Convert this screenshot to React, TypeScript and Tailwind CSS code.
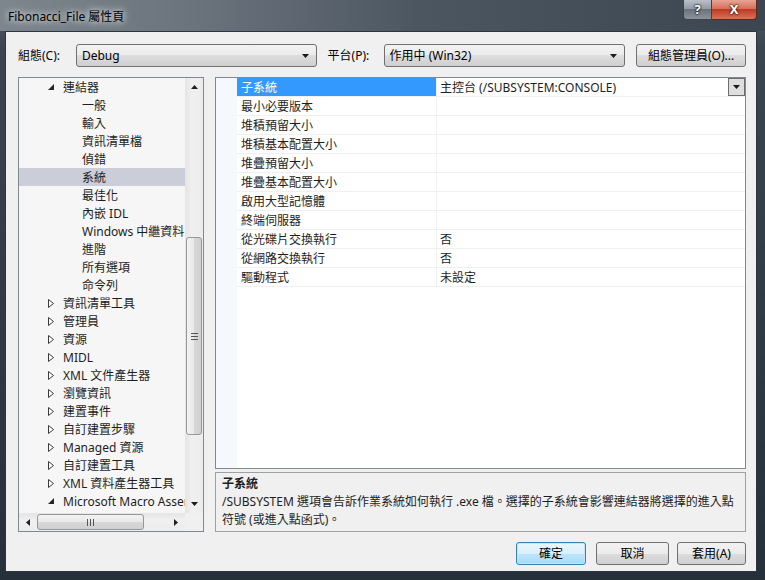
import React from "react";

const F = "font-['Noto_Sans','Noto_Sans_CJK_TC',sans-serif]";

const btn =
  "border border-[#707070] rounded-[3px] bg-[linear-gradient(to_bottom,#f2f2f2_0%,#ebebeb_50%,#dddddd_50%,#cfcfcf_100%)]";

function DownTri({ className = "" }: { className?: string }) {
  return (
    <svg width="7" height="4" viewBox="0 0 7 4" className={className}>
      <polygon points="0,0 7,0 3.5,4" fill="#1a1a1a" />
    </svg>
  );
}

function Combo({ text, w }: { text: string; w: string }) {
  return (
    <div className={`${w} h-[23px] ${btn} flex items-center pl-[5px] pr-[7px] justify-between`}>
      <span className="text-[12px] leading-[16px] pt-[1px] text-black">{text}</span>
      <DownTri />
    </div>
  );
}

function Expanded() {
  return (
    <svg width="6" height="6" viewBox="0 0 6 6">
      <polygon points="6,0 6,6 0,6" fill="#262626" />
    </svg>
  );
}
function Collapsed() {
  return (
    <svg width="6" height="9" viewBox="0 0 6 9">
      <polygon points="0.5,0.5 5.5,4.5 0.5,8.5" fill="white" stroke="#3a3a3a" strokeWidth="1" />
    </svg>
  );
}

type TreeItem = { t: string; lvl: 1 | 2; exp?: boolean; sel?: boolean };
const tree: TreeItem[] = [
  { t: "連結器", lvl: 1, exp: true },
  { t: "一般", lvl: 2 },
  { t: "輸入", lvl: 2 },
  { t: "資訊清單檔", lvl: 2 },
  { t: "偵錯", lvl: 2 },
  { t: "系統", lvl: 2, sel: true },
  { t: "最佳化", lvl: 2 },
  { t: "內嵌 IDL", lvl: 2 },
  { t: "Windows 中繼資料", lvl: 2 },
  { t: "進階", lvl: 2 },
  { t: "所有選項", lvl: 2 },
  { t: "命令列", lvl: 2 },
  { t: "資訊清單工具", lvl: 1 },
  { t: "管理員", lvl: 1 },
  { t: "資源", lvl: 1 },
  { t: "MIDL", lvl: 1 },
  { t: "XML 文件產生器", lvl: 1 },
  { t: "瀏覽資訊", lvl: 1 },
  { t: "建置事件", lvl: 1 },
  { t: "自訂建置步驟", lvl: 1 },
  { t: "Managed 資源", lvl: 1 },
  { t: "自訂建置工具", lvl: 1 },
  { t: "XML 資料產生器工具", lvl: 1 },
  { t: "Microsoft Macro Assembler", lvl: 1, exp: true },
];

const props: [string, string][] = [
  ["子系統", "主控台 (/SUBSYSTEM:CONSOLE)"],
  ["最小必要版本", ""],
  ["堆積預留大小", ""],
  ["堆積基本配置大小", ""],
  ["堆疊預留大小", ""],
  ["堆疊基本配置大小", ""],
  ["啟用大型記憶體", ""],
  ["終端伺服器", ""],
  ["從光碟片交換執行", "否"],
  ["從網路交換執行", "否"],
  ["驅動程式", "未設定"],
];

const thumbV =
  "border border-[#979797] rounded-[3px] bg-[linear-gradient(to_right,#f3f3f3,#e8e8e8_50%,#d8d8d8_50%,#d0d0d0)]";
const thumbH =
  "border border-[#979797] rounded-[3px] bg-[linear-gradient(to_bottom,#f3f3f3,#e8e8e8_50%,#d8d8d8_50%,#d0d0d0)]";

export default function App() {
  return (
    <div
      className={`${F} w-[765px] h-[580px] overflow-hidden flex flex-col bg-[linear-gradient(to_bottom,#56606a_0%,#3a4550_8%,#26303b_100%)]`}
    >
      {/* title bar */}
      <div className="h-[31px] shrink-0 flex items-start relative bg-[linear-gradient(to_right,#7d868e_0%,#6b747d_25%,#4c5661_55%,#3c4651_100%)]">
        <div className="pl-[8px] pt-[8px] text-[12px] leading-[17px] text-black [text-shadow:0_0_6px_rgba(255,255,255,0.9),0_0_10px_rgba(255,255,255,0.6)]">
          Fibonacci_File 屬性頁
        </div>
        <div className="ml-auto mr-[8px] flex h-[20px]">
          <div className="w-[29px] h-[20px] border border-[#3b434c] border-t-0 rounded-bl-[4px] bg-[linear-gradient(to_bottom,#b9c0c7,#8f989f_50%,#6a737b_50%,#8b949b)] flex items-center justify-center text-white font-bold text-[13px] [text-shadow:0_0_2px_#000,0_0_2px_#000]">
            ?
          </div>
          <div className="w-[45px] h-[20px] border border-[#5a2a22] border-t-0 border-l-0 rounded-br-[4px] bg-[linear-gradient(to_bottom,#e8a493,#d36b56_50%,#bf3a22_50%,#d8735a)] flex items-center justify-center text-white font-bold text-[13px] [text-shadow:0_0_2px_#3a0a00,0_0_2px_#3a0a00]">
            X
          </div>
        </div>
      </div>

      {/* client */}
      <div className="ml-[5px] mr-[8px] h-[541px] bg-[#f0f0f0] border border-[#2c3640] flex flex-col pl-[12px] pr-[10px] pt-[12px] text-[12px] text-black">
        {/* row 1 */}
        <div className="flex items-center h-[23px]">
          <span className="w-[58px] leading-[16px] pt-[1px]">組態(C):</span>
          <Combo text="Debug" w="w-[241px]" />
          <span className="ml-[11px] w-[56px] leading-[16px] pt-[1px]">平台(P):</span>
          <Combo text="作用中 (Win32)" w="w-[242px]" />
          <div className={`ml-[11px] w-[110px] h-[23px] ${btn} flex items-center justify-center leading-[16px] pt-[1px]`}>
            組態管理員(O)...
          </div>
        </div>

        {/* main */}
        <div className="flex mt-[10px] h-[455px]">
          {/* tree */}
          <div className="w-[186px] h-full border border-[#828790] bg-[#f6f6f6] flex flex-col">
            <div className="flex flex-1 min-h-0">
              <div className="w-[166px] overflow-hidden flex flex-col">
                {tree.map((it, i) => (
                  <div
                    key={i}
                    className={`h-[18px] shrink-0 flex items-center whitespace-nowrap ${it.sel ? "bg-[#cbcdd9]" : ""}`}
                  >
                    {it.lvl === 1 ? (
                      <>
                        <div className="w-[44px] shrink-0 flex justify-end pr-[9px]">
                          {it.exp ? <Expanded /> : <Collapsed />}
                        </div>
                        <span className="leading-[16px] pt-[2px] text-[#1e1e1e]">{it.t}</span>
                      </>
                    ) : (
                      <>
                        <div className="w-[63px] shrink-0" />
                        <span className="leading-[16px] pt-[2px] text-[#1e1e1e]">{it.t}</span>
                      </>
                    )}
                  </div>
                ))}
              </div>
              {/* vertical scrollbar */}
              <div className="w-[18px] bg-[linear-gradient(to_right,#e4e4e4,#f0f0f0_40%,#ececec)] flex flex-col items-center">
                <div className="h-[18px] flex items-center justify-center">
                  <svg width="7" height="4" viewBox="0 0 7 4">
                    <polygon points="0,4 7,4 3.5,0" fill="#222" />
                  </svg>
                </div>
                <div className="h-[141px]" />
                <div className={`w-[16px] h-[198px] ${thumbV} flex items-center justify-center`}>
                  <div className="flex flex-col gap-[2px]">
                    <div className="w-[7px] h-[1px] bg-[#555]" />
                    <div className="w-[7px] h-[1px] bg-[#555]" />
                    <div className="w-[7px] h-[1px] bg-[#555]" />
                  </div>
                </div>
                <div className="flex-1" />
                <div className="h-[18px] flex items-center justify-center">
                  <DownTri />
                </div>
              </div>
            </div>
            {/* horizontal scrollbar */}
            <div className="h-[18px] flex">
              <div className="w-[166px] flex items-center bg-[linear-gradient(to_bottom,#e4e4e4,#f0f0f0_40%,#ececec)]">
                <div className="w-[18px] flex justify-center">
                  <svg width="4" height="7" viewBox="0 0 4 7">
                    <polygon points="4,0 4,7 0,3.5" fill="#222" />
                  </svg>
                </div>
                <div className={`w-[107px] h-[16px] ${thumbH} flex items-center justify-center`}>
                  <div className="flex gap-[2px]">
                    <div className="w-[1px] h-[7px] bg-[#555]" />
                    <div className="w-[1px] h-[7px] bg-[#555]" />
                    <div className="w-[1px] h-[7px] bg-[#555]" />
                  </div>
                </div>
                <div className="flex-1" />
                <div className="w-[18px] flex justify-center">
                  <svg width="4" height="7" viewBox="0 0 4 7">
                    <polygon points="0,0 0,7 4,3.5" fill="#222" />
                  </svg>
                </div>
              </div>
              <div className="w-[18px] bg-[#f0f0f0]" />
            </div>
          </div>

          {/* right column */}
          <div className="ml-[11px] flex-1 flex flex-col">
            <div className="h-[392px] border border-[#828790] bg-white flex">
              <div className="w-[21px] bg-[#f5f8fc]" />
              <div className="flex-1 flex flex-col">
                {props.map(([n, v], i) => (
                  <div key={i} className="h-[19px] flex border-b border-[#f0f0f0]">
                    <div
                      className={`w-[200px] border-r border-[#f0f0f0] pl-[4px] pt-[2px] flex items-center leading-[16px] ${
                        i === 0 ? "bg-[#3399ff] text-white" : "text-[#1e1e1e]"
                      }`}
                    >
                      {n}
                    </div>
                    <div className="flex-1 pl-[3px] pt-[2px] flex items-center leading-[16px] text-[#1e1e1e]">{v}</div>
                    {i === 0 && (
                      <div className="w-[17px] h-[18px] border border-[#6d6d6d] bg-[#dedede] flex items-center justify-center">
                        <DownTri />
                      </div>
                    )}
                  </div>
                ))}
              </div>
            </div>
            <div className="mt-[3px] h-[60px] border border-[#a0a0a0] bg-[#f0f0f0] px-[6px] pt-[2px] leading-[18px] text-[#1e1e1e]">
              <div className="font-bold">子系統</div>
              <div>/SUBSYSTEM 選項會告訴作業系統如何執行 .exe 檔。選擇的子系統會影響連結器將選擇的進入點</div>
              <div>符號 (或進入點函式)。</div>
            </div>
          </div>
        </div>

        {/* buttons */}
        <div className="flex justify-end mt-[10px]">
          <div className="w-[70px] h-[23px] border border-[#3c7fb1] rounded-[3px] bg-[linear-gradient(to_bottom,#eaf6fd_0%,#d9f0fc_50%,#bee6fd_50%,#a7d9f5_100%)] flex items-center justify-center leading-[16px] pt-[1px] shadow-[inset_0_0_0_1px_#c5e5f7]">
            確定
          </div>
          <div className={`ml-[10px] w-[73px] h-[23px] ${btn} flex items-center justify-center leading-[16px] pt-[1px]`}>取消</div>
          <div className={`ml-[8px] w-[69px] h-[23px] ${btn} flex items-center justify-center leading-[16px] pt-[1px]`}>套用(A)</div>
        </div>
      </div>
    </div>
  );
}
